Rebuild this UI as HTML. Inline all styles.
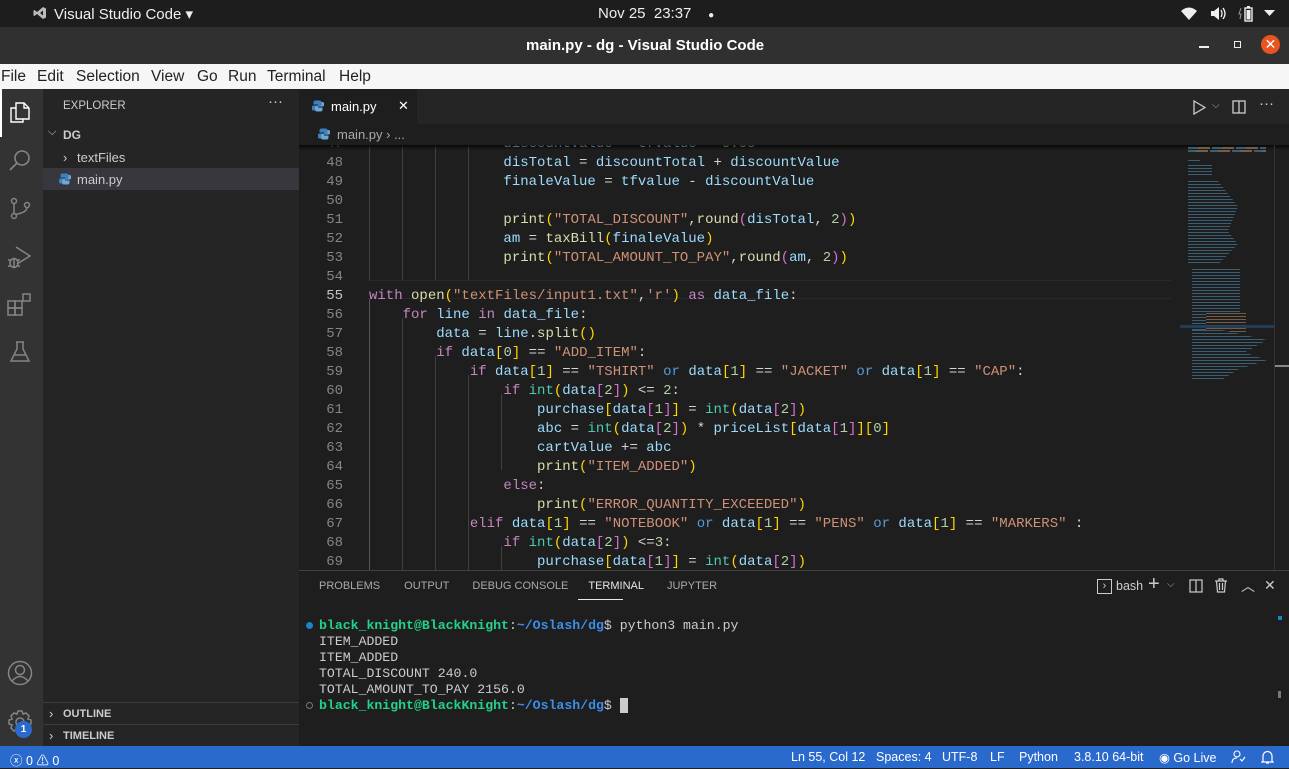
<!DOCTYPE html>
<html><head><meta charset="utf-8"><style>
*{margin:0;padding:0;box-sizing:border-box}
body{width:1289px;height:768px;overflow:hidden;background:#1e1e1e;font-family:"Liberation Sans",sans-serif;position:relative}
.a{position:absolute}
.ub{left:0;top:0;width:1289px;height:27px;background:#1d1d1d;color:#eee;font-size:15px}
.tb{left:0;top:27px;width:1289px;height:37px;background:#303030;color:#fff;font-size:15px;font-weight:bold}
.mb{left:0;top:64px;width:1289px;height:25px;background:#f6f6f6;color:#222;font-size:15.5px}
.mb span{position:absolute;top:4px}
.act{left:0;top:89px;width:43px;height:657px;background:#333}
.sb{left:43px;top:89px;width:256px;height:657px;background:#252526;color:#ccc;font-size:13px}
.ed{left:299px;top:89px;width:990px;height:481px;background:#1e1e1e}
.code{font-family:"Liberation Mono","DejaVu Sans Mono",monospace;font-size:14px;white-space:pre;color:#9cdcfe}
.ln{position:absolute;left:0;width:44px;text-align:right;color:#858585}
.cl{position:absolute;left:70px}
.k{color:#c586c0}.s{color:#ce9178}.f{color:#dcdcaa}.b{color:#4ec9b0}.n{color:#b5cea8}.w{color:#d4d4d4}.y{color:#ffd700}.p{color:#da70d6}.bl{color:#179fff}.o{color:#569cd6}
.panel{left:299px;top:570px;width:990px;height:176px;background:#1e1e1e;border-top:1px solid #414141}
.term{font-family:"Liberation Mono","DejaVu Sans Mono",monospace;font-size:13.2px;white-space:pre;color:#ccc}
.st{left:0;top:746px;width:1289px;height:22px;background:#2b6acd;color:#fff;font-size:12.5px}
.g{color:#23d18b;font-weight:bold}.u{color:#3b8eea;font-weight:bold}
</style></head><body>
<div class="a ub">
 <svg class="a" style="left:33px;top:6px" width="14" height="14" viewBox="0 0 14 14"><path d="M10 1L13 2.5V11.5L10 13L4 8L1.5 10L0.5 9.5V4.5L1.5 4L4 6L10 1ZM10 4.5L7 7L10 9.5Z" fill="#bbb"/></svg>
 <span class="a" style="left:54px;top:5px">Visual Studio Code ▾</span>
 <span class="a" style="left:598px;top:5px">Nov 25&nbsp; 23:37&nbsp;&nbsp;&nbsp;&nbsp;<span style="font-size:10px">●</span></span>
 <svg class="a" style="left:1181px;top:7px" width="16" height="13"><path d="M0 4Q8 -3 16 4L8 13Z" fill="#eee"/></svg>
 <svg class="a" style="left:1210px;top:6px" width="16" height="15"><path d="M1 5h3l5-4v13l-5-4H1z" fill="#eee"/><path d="M11 4q2 3.5 0 7M13 2q4 5.5 0 11" stroke="#eee" fill="none" stroke-width="1.3"/></svg>
 <svg class="a" style="left:1238px;top:5px" width="16" height="17"><path d="M3 3l-2 6h2l-1 5" stroke="#999" fill="none"/><rect x="7" y="3" width="7" height="13" fill="none" stroke="#eee" stroke-width="1.4"/><rect x="9" y="1" width="3" height="2" fill="#eee"/><rect x="8.5" y="5" width="4" height="9.5" fill="#eee"/></svg>
 <svg class="a" style="left:1264px;top:10px" width="11" height="7"><path d="M0 0h11L5.5 6z" fill="#eee"/></svg>
</div>
<div class="a tb"><span class="a" style="left:526px;top:10px">main.py - dg - Visual Studio Code</span>
 <div class="a" style="left:1199px;top:19px;width:10px;height:1.5px;background:#eee"></div>
 <div class="a" style="left:1234px;top:14px;width:7px;height:7px;border:1.3px solid #eee"></div>
 <div class="a" style="left:1261px;top:8px;width:19px;height:19px;border-radius:50%;background:#e95420;color:#fff;font-size:14px;text-align:center;line-height:19px;font-weight:normal">✕</div>
</div>
<div class="a mb"><span style="left:1px">File</span><span style="left:37px">Edit</span><span style="left:76px">Selection</span><span style="left:151px">View</span><span style="left:197px">Go</span><span style="left:228px">Run</span><span style="left:267px">Terminal</span><span style="left:339px">Help</span></div>
<div class="a act">
 <div class="a" style="left:0;top:0;width:2px;height:48px;background:#fff"></div>
 <svg class="a" style="left:8px;top:11px" width="24" height="24" fill="none" stroke="#fff" stroke-width="1.4"><path d="M8 3h8l5 5v11H8z"/><path d="M16 3v5h5"/><path d="M8 8H3v14h12v-3"/></svg>
 <svg class="a" style="left:8px;top:59px" width="24" height="24" fill="none" stroke="#858585" stroke-width="1.6"><circle cx="14" cy="10" r="7"/><path d="M9 15L2 22"/></svg>
 <svg class="a" style="left:8px;top:107px" width="24" height="24" fill="none" stroke="#858585" stroke-width="1.5"><circle cx="6" cy="5" r="2.5"/><circle cx="6" cy="20" r="2.5"/><circle cx="19" cy="9" r="2.5"/><path d="M6 7.5v10M19 11.5q0 5-12 7"/></svg>
 <svg class="a" style="left:6px;top:155px" width="26" height="26" fill="none" stroke="#858585" stroke-width="1.5"><path d="M10 3l14 9-13 8"/><ellipse cx="8" cy="19" rx="4" ry="4.5"/><path d="M2 16h3M2 22h3M11 16h3M11 22h3M8 14v10"/></svg>
 <svg class="a" style="left:7px;top:203px" width="26" height="26" fill="none" stroke="#858585" stroke-width="1.5"><rect x="1" y="9" width="7" height="7"/><rect x="8" y="9" width="7" height="7"/><rect x="1" y="16" width="7" height="7"/><rect x="8" y="16" width="7" height="7"/><rect x="16" y="2" width="7" height="7"/></svg>
 <svg class="a" style="left:9px;top:251px" width="22" height="24" fill="none" stroke="#858585" stroke-width="1.5"><path d="M7 2h8M8 2v7L2 21h18L14 9V2M5 15h12"/></svg>
 <svg class="a" style="left:7px;top:571px" width="26" height="26" fill="none" stroke="#858585" stroke-width="1.5"><circle cx="13" cy="13" r="11.5"/><circle cx="13" cy="10" r="4.5"/><path d="M5 21q8-9 16 0"/></svg>
 <svg class="a" style="left:7px;top:620px" width="26" height="26" fill="none" stroke="#858585" stroke-width="1.5"><circle cx="13" cy="13" r="4"/><path d="M11 2h4l1 3 3-1 3 3-1 3 3 1v4l-3 1 1 3-3 3-3-1-1 3h-4l-1-3-3 1-3-3 1-3-3-1v-4l3-1-1-3 3-3 3 1z"/></svg>
 <div class="a" style="left:15px;top:632px;width:17px;height:17px;border-radius:50%;background:#2b6acd;color:#fff;font-size:10px;font-weight:bold;text-align:center;line-height:17px">1</div>
</div>
<div class="a sb">
 <span class="a" style="left:20px;top:11px;font-size:11.5px">EXPLORER</span><span class="a" style="left:225px;top:4px;font-size:15px">···</span>
 <span class="a" style="left:5px;top:37px;font-size:11px">⌵</span><span class="a" style="left:20px;top:39px;font-weight:bold;font-size:12px">DG</span>
 <span class="a" style="left:20px;top:61px">›</span><span class="a" style="left:34px;top:61px">textFiles</span>
 <div class="a" style="left:0;top:79px;width:256px;height:22px;background:#37373d"></div>
 <svg class="a" style="left:16px;top:84px" width="12" height="12"><path d="M6 0.5h-2.5a2 2 0 00-2 2v2h4.5v1H1.5a1.5 1.5 0 00-1.5 1.5v2a1.5 1.5 0 001.5 1.5h1.5v-2a2 2 0 012-2h3a1.5 1.5 0 001.5-1.5v-2.5a2 2 0 00-2-2z" fill="#3e7fbf"/><path d="M6 11.5h2.5a2 2 0 002-2v-2h-4.5v-1h4.5a1.5 1.5 0 001.5-1.5v-1.5a1.5 1.5 0 00-1.5-1.5h-1v2a2 2 0 01-2 2h-3a1.5 1.5 0 00-1.5 1.5v2a2 2 0 002 2z" fill="#6aa8d8"/></svg>
 <span class="a" style="left:34px;top:83px">main.py</span>
 <div class="a" style="left:0;top:613px;width:256px;border-top:1px solid #3c3c3c"></div>
 <span class="a" style="left:6px;top:617px">›</span><span class="a" style="left:20px;top:619px;font-weight:bold;font-size:11px">OUTLINE</span>
 <div class="a" style="left:0;top:635px;width:256px;border-top:1px solid #3c3c3c"></div>
 <span class="a" style="left:6px;top:639px">›</span><span class="a" style="left:20px;top:641px;font-weight:bold;font-size:11px">TIMELINE</span>
</div>
<div class="a ed">
 <div class="a" style="left:0;top:0;width:990px;height:35px;background:#252526"></div>
 <div class="a" style="left:0;top:0;width:118px;height:35px;background:#1e1e1e;color:#fff;font-size:13px">
  <svg class="a" style="left:13px;top:11px" width="12" height="12"><path d="M6 0.5h-2.5a2 2 0 00-2 2v2h4.5v1H1.5a1.5 1.5 0 00-1.5 1.5v2a1.5 1.5 0 001.5 1.5h1.5v-2a2 2 0 012-2h3a1.5 1.5 0 001.5-1.5v-2.5a2 2 0 00-2-2z" fill="#3e7fbf"/><path d="M6 11.5h2.5a2 2 0 002-2v-2h-4.5v-1h4.5a1.5 1.5 0 001.5-1.5v-1.5a1.5 1.5 0 00-1.5-1.5h-1v2a2 2 0 01-2 2h-3a1.5 1.5 0 00-1.5 1.5v2a2 2 0 002 2z" fill="#6aa8d8"/></svg>
  <span class="a" style="left:32px;top:10px">main.py</span><span class="a" style="left:99px;top:9px;font-size:13px">✕</span></div>
 <svg class="a" style="left:893px;top:11px" width="14" height="15" fill="none" stroke="#ccc" stroke-width="1.3"><path d="M2 1l11 6.5L2 14z"/></svg>
 <span class="a" style="left:913px;top:11px;color:#aaa;font-size:10px">⌵</span>
 <svg class="a" style="left:933px;top:11px" width="14" height="14" fill="none" stroke="#ccc" stroke-width="1.3"><rect x="1" y="1" width="12" height="12"/><path d="M7 1v12"/></svg>
 <span class="a" style="left:960px;top:6px;color:#ccc;font-size:15px">···</span>
 <div class="a" style="left:0;top:35px;width:990px;height:20px;color:#aaa;font-size:13px">
  <svg class="a" style="left:19px;top:4px" width="12" height="12"><path d="M6 0.5h-2.5a2 2 0 00-2 2v2h4.5v1H1.5a1.5 1.5 0 00-1.5 1.5v2a1.5 1.5 0 001.5 1.5h1.5v-2a2 2 0 012-2h3a1.5 1.5 0 001.5-1.5v-2.5a2 2 0 00-2-2z" fill="#3e7fbf"/><path d="M6 11.5h2.5a2 2 0 002-2v-2h-4.5v-1h4.5a1.5 1.5 0 001.5-1.5v-1.5a1.5 1.5 0 00-1.5-1.5h-1v2a2 2 0 01-2 2h-3a1.5 1.5 0 00-1.5 1.5v2a2 2 0 002 2z" fill="#6aa8d8"/></svg>
  <span class="a" style="left:38px;top:3px">main.py › ...</span></div>
 <div class="a" style="left:0;top:56px;width:990px;height:425px;overflow:hidden">
  <div class="a code" style="left:0;top:-8px;width:990px;height:440px;line-height:19px">
   <div class="a" style="left:69px;top:143px;width:804px;height:19px;border-top:1px solid #282828;border-bottom:1px solid #282828"></div>
   <div class="a" style="left:70px;top:0;height:143px;border-left:1px solid #404040"></div><div class="a" style="left:103px;top:0;height:143px;border-left:1px solid #404040"></div><div class="a" style="left:136px;top:0;height:143px;border-left:1px solid #404040"></div><div class="a" style="left:169px;top:0;height:143px;border-left:1px solid #404040"></div>
   <div class="a" style="left:70px;top:162px;height:280px;border-left:1px solid #585858"></div><div class="a" style="left:103px;top:181px;height:260px;border-left:1px solid #404040"></div><div class="a" style="left:136px;top:219px;height:220px;border-left:1px solid #404040"></div><div class="a" style="left:169px;top:238px;height:200px;border-left:1px solid #404040"></div><div class="a" style="left:202px;top:257px;height:76px;border-left:1px solid #404040"></div><div class="a" style="left:202px;top:409px;height:30px;border-left:1px solid #404040"></div>
   <div class="ln" style="top:-2px">47</div><div class="cl" style="top:-2px">                discountValue <span class="w">=</span> tfvalue <span class="w">*</span> <span class="n">0.05</span></div>
   <div class="ln" style="top:17px">48</div><div class="cl" style="top:17px">                disTotal <span class="w">=</span> discountTotal <span class="w">+</span> discountValue</div>
   <div class="ln" style="top:36px">49</div><div class="cl" style="top:36px">                finaleValue <span class="w">=</span> tfvalue <span class="w">-</span> discountValue</div>
   <div class="ln" style="top:55px">50</div>
   <div class="ln" style="top:74px">51</div><div class="cl" style="top:74px">                <span class="f">print</span><span class="y">(</span><span class="s">"TOTAL_DISCOUNT"</span><span class="w">,</span><span class="f">round</span><span class="p">(</span>disTotal<span class="w">, </span><span class="n">2</span><span class="p">)</span><span class="y">)</span></div>
   <div class="ln" style="top:93px">52</div><div class="cl" style="top:93px">                am <span class="w">=</span> <span class="f">taxBill</span><span class="y">(</span>finaleValue<span class="y">)</span></div>
   <div class="ln" style="top:112px">53</div><div class="cl" style="top:112px">                <span class="f">print</span><span class="y">(</span><span class="s">"TOTAL_AMOUNT_TO_PAY"</span><span class="w">,</span><span class="f">round</span><span class="p">(</span>am<span class="w">, </span><span class="n">2</span><span class="p">)</span><span class="y">)</span></div>
   <div class="ln" style="top:131px">54</div>
   <div class="ln" style="top:150px;color:#c6c6c6">55</div><div class="cl" style="top:150px"><span class="k">with</span> <span class="f">open</span><span class="y">(</span><span class="s">"textFiles/input1.txt"</span><span class="w">,</span><span class="s">'r'</span><span class="y">)</span> <span class="k">as</span> data_file<span class="w">:</span></div>
   <div class="ln" style="top:169px">56</div><div class="cl" style="top:169px">    <span class="k">for</span> line <span class="k">in</span> data_file<span class="w">:</span></div>
   <div class="ln" style="top:188px">57</div><div class="cl" style="top:188px">        data <span class="w">=</span> line<span class="w">.</span><span class="f">split</span><span class="y">()</span></div>
   <div class="ln" style="top:207px">58</div><div class="cl" style="top:207px">        <span class="k">if</span> data<span class="y">[</span><span class="n">0</span><span class="y">]</span> <span class="w">==</span> <span class="s">"ADD_ITEM"</span><span class="w">:</span></div>
   <div class="ln" style="top:226px">59</div><div class="cl" style="top:226px">            <span class="k">if</span> data<span class="y">[</span><span class="n">1</span><span class="y">]</span> <span class="w">==</span> <span class="s">"TSHIRT"</span> <span class="o">or</span> data<span class="y">[</span><span class="n">1</span><span class="y">]</span> <span class="w">==</span> <span class="s">"JACKET"</span> <span class="o">or</span> data<span class="y">[</span><span class="n">1</span><span class="y">]</span> <span class="w">==</span> <span class="s">"CAP"</span><span class="w">:</span></div>
   <div class="ln" style="top:245px">60</div><div class="cl" style="top:245px">                <span class="k">if</span> <span class="b">int</span><span class="y">(</span>data<span class="p">[</span><span class="n">2</span><span class="p">]</span><span class="y">)</span> <span class="w">&lt;=</span> <span class="n">2</span><span class="w">:</span></div>
   <div class="ln" style="top:264px">61</div><div class="cl" style="top:264px">                    purchase<span class="y">[</span>data<span class="p">[</span><span class="n">1</span><span class="p">]</span><span class="y">]</span> <span class="w">=</span> <span class="b">int</span><span class="y">(</span>data<span class="p">[</span><span class="n">2</span><span class="p">]</span><span class="y">)</span></div>
   <div class="ln" style="top:283px">62</div><div class="cl" style="top:283px">                    abc <span class="w">=</span> <span class="b">int</span><span class="y">(</span>data<span class="p">[</span><span class="n">2</span><span class="p">]</span><span class="y">)</span> <span class="w">*</span> priceList<span class="y">[</span>data<span class="p">[</span><span class="n">1</span><span class="p">]</span><span class="y">][</span><span class="n">0</span><span class="y">]</span></div>
   <div class="ln" style="top:302px">63</div><div class="cl" style="top:302px">                    cartValue <span class="w">+=</span> abc</div>
   <div class="ln" style="top:321px">64</div><div class="cl" style="top:321px">                    <span class="f">print</span><span class="y">(</span><span class="s">"ITEM_ADDED"</span><span class="y">)</span></div>
   <div class="ln" style="top:340px">65</div><div class="cl" style="top:340px">                <span class="k">else</span><span class="w">:</span></div>
   <div class="ln" style="top:359px">66</div><div class="cl" style="top:359px">                    <span class="f">print</span><span class="y">(</span><span class="s">"ERROR_QUANTITY_EXCEEDED"</span><span class="y">)</span></div>
   <div class="ln" style="top:378px">67</div><div class="cl" style="top:378px">            <span class="k">elif</span> data<span class="y">[</span><span class="n">1</span><span class="y">]</span> <span class="w">==</span> <span class="s">"NOTEBOOK"</span> <span class="o">or</span> data<span class="y">[</span><span class="n">1</span><span class="y">]</span> <span class="w">==</span> <span class="s">"PENS"</span> <span class="o">or</span> data<span class="y">[</span><span class="n">1</span><span class="y">]</span> <span class="w">==</span> <span class="s">"MARKERS"</span> <span class="w">:</span></div>
   <div class="ln" style="top:397px">68</div><div class="cl" style="top:397px">                <span class="k">if</span> <span class="b">int</span><span class="y">(</span>data<span class="p">[</span><span class="n">2</span><span class="p">]</span><span class="y">)</span> <span class="w">&lt;=</span><span class="n">3</span><span class="w">:</span></div>
   <div class="ln" style="top:416px">69</div><div class="cl" style="top:416px">                    purchase<span class="y">[</span>data<span class="p">[</span><span class="n">1</span><span class="p">]</span><span class="y">]</span> <span class="w">=</span> <span class="b">int</span><span class="y">(</span>data<span class="p">[</span><span class="n">2</span><span class="p">]</span><span class="y">)</span></div>
  </div>
  <div class="a" style="left:0;top:0;width:990px;height:5px;background:linear-gradient(#000b,#0000)"></div>
 </div>
 <div class="a" style="left:881px;top:56px;width:95px;height:425px;overflow:hidden;opacity:.7">
  <div class="a" style="left:8px;top:2px;width:78px;height:2px;background:repeating-linear-gradient(90deg,#4a7a9a 0 10px,#9a7a5a 10px 22px,#1e1e1e 22px 24px)"></div>
  <div class="a" style="left:8px;top:5px;width:78px;height:2px;background:repeating-linear-gradient(90deg,#4a7a9a 0 8px,#9a7a5a 8px 20px,#1e1e1e 20px 22px)"></div>
  <div class="a" style="left:8px;top:15px;width:12px;height:1px;background:#4a7a9a"></div>
  <div class="a" style="left:8px;top:20px;width:24px;height:12px;background:repeating-linear-gradient(#4a7a9a 0 1px,#1e1e1e 1px 3px)"></div>
  <div class="a" style="left:8px;top:36px;width:50px;height:84px;background:repeating-linear-gradient(#4a7a9a 0 1px,#1e1e1e 1px 3px);clip-path:polygon(0 0,60% 0,100% 30%,80% 60%,100% 75%,60% 100%,0 100%)"></div>
  <div class="a" style="left:12px;top:124px;width:48px;height:66px;background:repeating-linear-gradient(#4a7a9a 0 1px,#1e1e1e 1px 3px)"></div>
  <div class="a" style="left:26px;top:168px;width:40px;height:20px;background:repeating-linear-gradient(#9a7a5a 0 1px,#1e1e1e 1px 3px)"></div>
  <div class="a" style="left:0;top:180px;width:95px;height:3px;background:#264f78;opacity:.9"></div>
  <div class="a" style="left:12px;top:185px;width:75px;height:50px;background:repeating-linear-gradient(#4a7a9a 0 1px,#1e1e1e 1px 3px);clip-path:polygon(0 0,40% 0,100% 20%,70% 45%,100% 60%,60% 80%,40% 100%,0 100%)"></div>
 </div>
 <div class="a" style="left:975px;top:56px;width:1px;height:425px;background:#333"></div>
 <div class="a" style="left:976px;top:276px;width:14px;height:2px;background:#888"></div>
</div>
<div class="a panel">
 <div class="a" style="left:20px;top:9px;color:#aaa;font-size:11px"><span>PROBLEMS</span><span style="margin-left:24px">OUTPUT</span><span style="margin-left:23px">DEBUG CONSOLE</span><span style="margin-left:20px;color:#e7e7e7">TERMINAL</span><span style="margin-left:23px">JUPYTER</span></div>
 <div class="a" style="left:279px;top:28px;width:45px;height:1px;background:#e7e7e7"></div>
 <div class="a" style="left:798px;top:8px;width:15px;height:15px;border:1px solid #ccc;color:#ccc;font-size:11px;text-align:center;line-height:12px">›</div>
 <span class="a" style="left:817px;top:8px;color:#ccc;font-size:12.5px">bash</span>
 <span class="a" style="left:849px;top:2px;color:#ccc;font-size:20px">+</span><span class="a" style="left:868px;top:8px;color:#aaa;font-size:10px">⌵</span>
 <svg class="a" style="left:890px;top:8px" width="14" height="14" fill="none" stroke="#ccc" stroke-width="1.2"><rect x="1" y="1" width="12" height="12"/><path d="M7 1v12"/></svg>
 <svg class="a" style="left:915px;top:7px" width="14" height="15" fill="none" stroke="#ccc" stroke-width="1.2"><path d="M1 3h12M5 3V1h4v2M2.5 3l1 11h7l1-11M5.5 5v7M8.5 5v7"/></svg>
 <span class="a" style="left:942px;top:5px;color:#ccc;font-size:14px">︿</span><span class="a" style="left:965px;top:6px;color:#ccc;font-size:14px">✕</span>
 <div class="a" style="left:979px;top:45px;width:4px;height:4px;background:#1a85c6"></div>
 <div class="a" style="left:979px;top:120px;width:3px;height:7px;background:#777"></div>
 <div class="a term" style="left:20px;top:47px;line-height:16px"><span class="g">black_knight@BlackKnight</span>:<span class="u">~/Oslash/dg</span>$ python3 main.py
ITEM_ADDED
ITEM_ADDED
TOTAL_DISCOUNT 240.0
TOTAL_AMOUNT_TO_PAY 2156.0
<span class="g">black_knight@BlackKnight</span>:<span class="u">~/Oslash/dg</span>$ <span style="background:#ccc"> </span></div>
 <div class="a" style="left:7px;top:51px;width:7px;height:7px;border-radius:50%;background:#1a85c6"></div>
 <div class="a" style="left:7px;top:131px;width:7px;height:7px;border-radius:50%;border:1px solid #777"></div>
</div>
<div class="a st">
 <span class="a" style="left:10px;top:4px">ⓧ 0 ⚠ 0</span>
 <span class="a" style="left:791px;top:4px">Ln 55, Col 12</span>
 <span class="a" style="left:876px;top:4px">Spaces: 4</span>
 <span class="a" style="left:942px;top:4px">UTF-8</span>
 <span class="a" style="left:990px;top:4px">LF</span>
 <span class="a" style="left:1019px;top:4px">Python</span>
 <span class="a" style="left:1074px;top:4px">3.8.10 64-bit</span>
 <span class="a" style="left:1159px;top:4px">◉ Go Live</span>
 <svg class="a" style="left:1231px;top:4px" width="15" height="14" fill="none" stroke="#fff" stroke-width="1.1"><circle cx="6" cy="4" r="3"/><path d="M1 13q0-5 5-5M9 9l2 2 3-4"/></svg>
 <svg class="a" style="left:1261px;top:4px" width="13" height="14" fill="none" stroke="#fff" stroke-width="1.2"><path d="M2 11V6a4.5 4.5 0 019 0v5l1 1H1zM5 13h3"/></svg>
</div>
</body></html>
